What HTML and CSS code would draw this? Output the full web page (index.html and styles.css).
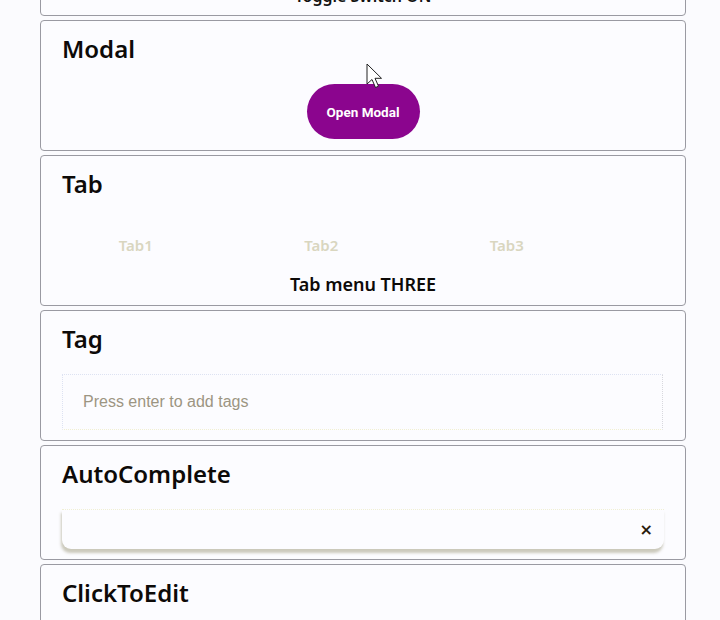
FILE: index.html
```html
<!DOCTYPE html>
<html lang="ko">
<head>
<meta charset="utf-8">
<title>Components</title>
<link rel="stylesheet" href="styles.css">
</head>
<body>
<main class="page">
  <section class="card card-toggle">
    <p class="toggle-text">Toggle Switch ON</p>
  </section>

  <section class="card">
    <h2 class="card-title">Modal</h2>
    <div class="center-row">
      <button class="modal-btn" type="button">Open Modal</button>
    </div>
  </section>

  <section class="card card-tab">
    <h2 class="card-title">Tab</h2>
    <ul class="tab-list">
      <li class="tab">Tab1</li>
      <li class="tab">Tab2</li>
      <li class="tab">Tab3</li>
    </ul>
    <p class="tab-content">Tab menu THREE</p>
  </section>

  <section class="card">
    <h2 class="card-title">Tag</h2>
    <div class="tag-box">
      <input class="tag-input" type="text" placeholder="Press enter to add tags">
    </div>
  </section>

  <section class="card">
    <h2 class="card-title">AutoComplete</h2>
    <div class="ac-box">
      <input class="ac-input" type="text">
      <span class="ac-clear">×</span>
    </div>
  </section>

  <section class="card card-last">
    <h2 class="card-title">ClickToEdit</h2>
  </section>
</main>

<svg class="cursor" width="20" height="28" viewBox="0 0 20 28" aria-hidden="true">
  <path d="M1 1 L1 21 L6 16.5 L9.5 24.5 L12.5 23.2 L9 15.3 L15.5 15.3 Z" fill="#fff" stroke="#222" stroke-width="1" stroke-linejoin="round"/>
</svg>
</body>
</html>
```

FILE: styles.css
```css
* { box-sizing: border-box; }

html, body {
  margin: 0;
  padding: 0;
  background: #fbfbfe;
  overflow: hidden;
}

body {
  font-family: "Noto Sans", "Noto Sans CJK KR", sans-serif;
  color: #111;
  position: relative;
  height: 620px;
}

.page {
  width: 646px;
  margin-left: 40px;
  display: flex;
  flex-direction: column;
  gap: 4px;
}

.card {
  border: 1px solid #9a9aa2;
  border-radius: 4px;
  background: #fcfcff;
  padding: 12px 0 10px;
}

.card-toggle {
  margin-top: -50px;
  padding: 0 0 9px;
  height: 66px;
  display: flex;
  align-items: flex-end;
  justify-content: center;
}

.toggle-text {
  margin: 0;
  font-size: 16px;
  font-weight: 600;
  line-height: 20px;
}

.card-title {
  margin: 0;
  padding: 0 21px;
  font-size: 24px;
  line-height: 32px;
  font-weight: 600;
  color: #0d0a08;
}

.center-row {
  display: flex;
  justify-content: center;
  margin-top: 19px;
}

.modal-btn {
  width: 113px;
  height: 55px;
  border: none;
  border-radius: 28px;
  background: #8b058e;
  color: #fff;
  font-family: Roboto, "Noto Sans", sans-serif;
  font-weight: 700;
  font-size: 13.5px;
  padding: 0;
  margin-bottom: 1px;
}

.card-tab { padding-bottom: 8px; }

.tab-list {
  list-style: none;
  margin: 32px 0 0 2px;
  padding: 0;
  display: flex;
}

.tab {
  width: 185.5px;
  text-align: center;
  font-size: 15px;
  font-weight: 600;
  line-height: 26px;
  color: #d9d6bf;
}

.tab-content {
  margin: 13px 0 0;
  text-align: center;
  font-size: 18px;
  font-weight: 600;
  line-height: 26px;
  color: #0d0a08;
}

.tag-box {
  margin: 19px 22px 0 21px;
  height: 56px;
  border: 1px dotted #dde2f2;
  border-bottom-color: #f1efd2;
  border-right-color: #d8d8de;
  display: flex;
  align-items: center;
  padding: 0 20px;
}

.tag-input {
  flex: 1;
  border: none;
  outline: none;
  background: transparent;
  font-family: "Liberation Sans", Arial, sans-serif;
  font-size: 16px;
  padding: 0;
  color: #333;
}

.tag-input::placeholder { color: #9c9582; }

.ac-box {
  margin: 19px 21px 0 21px;
  height: 40px;
  border-top: 1px dotted #f0efd4;
  border-radius: 0 0 9px 9px;
  box-shadow: -1px 4px 3px rgba(190, 188, 170, 0.8);
  display: flex;
  align-items: center;
  padding: 0 11px 0 14px;
  background: #fcfcff;
}

.ac-input {
  flex: 1;
  border: none;
  outline: none;
  background: transparent;
  font-size: 16px;
  padding: 0;
}

.ac-clear {
  font-family: "DejaVu Sans", sans-serif;
  font-size: 16px;
  font-weight: 700;
  line-height: 20px;
  color: #2a1a0a;
  margin-top: 1px;
}

.card-last { height: 80px; }

.cursor {
  position: absolute;
  left: 366px;
  top: 63px;
}
```
